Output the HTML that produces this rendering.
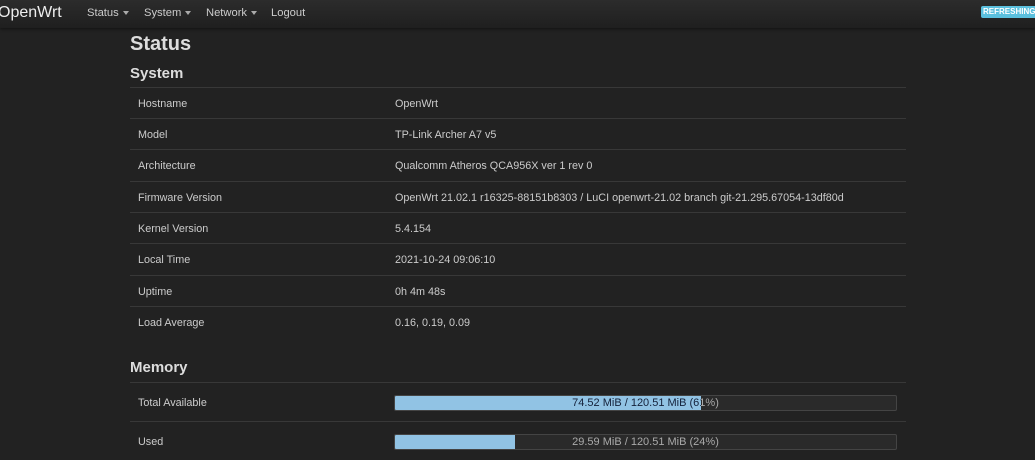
<!DOCTYPE html>
<html><head><meta charset="utf-8"><style>
*{margin:0;padding:0;box-sizing:border-box}
body{width:1035px;height:456px;overflow:hidden;background:#222;font-family:"Liberation Sans",sans-serif;color:#ccc;font-size:10.8px;position:relative}
.hdr{position:absolute;left:0;top:0;width:1035px;height:28px;background:linear-gradient(#2c2c2c,#1f1f1f);box-shadow:0 1px 3px rgba(0,0,0,.5)}
.brand{position:absolute;left:-2px;top:4px;font-size:16px;color:#eee}
.nav{position:absolute;top:7px;font-size:11.2px;color:#ccc}
.car{display:inline-block;width:0;height:0;border-left:3.5px solid transparent;border-right:3.5px solid transparent;border-top:4px solid #aaa;vertical-align:middle;margin-left:4px}
.badge{position:absolute;left:981px;top:6px;background:#5bc0de;color:#fff;font-size:8px;font-weight:bold;padding:1px 2px;line-height:10px;border-radius:2px;white-space:nowrap}
h1{position:absolute;left:130px;top:33px;font-size:20px;font-weight:bold;color:#ddd}
h2{position:absolute;left:130px;font-size:15px;font-weight:bold;color:#ddd}
.row{position:absolute;left:130px;width:776px;border-top:1px solid #383838}
.row span{position:absolute;left:8px}
.row b{font-weight:normal;position:absolute;left:265px;white-space:nowrap}
.bar{position:absolute;left:264px;top:12px;width:503px;height:16px;border:1px solid #444;background:#2a2a2a;border-radius:2px;overflow:hidden}
.fill{position:absolute;left:0;top:0;height:100%;background:#91c3e4;overflow:hidden}
.bt{position:absolute;left:0;top:0;width:501px;text-align:center;line-height:14px;font-size:11px;color:#aaa}
.fill .bt{color:#14213a}
</style></head><body>
<div class="hdr">
<div class="brand">OpenWrt</div>
<div class="nav" style="left:87px">Status<span class="car"></span></div>
<div class="nav" style="left:144px">System<span class="car"></span></div>
<div class="nav" style="left:206px">Network<span class="car"></span></div>
<div class="nav" style="left:271px">Logout</div>
<div class="badge">REFRESHING</div>
</div>
<h1>Status</h1>
<h2 style="top:65px">System</h2>
<div class="row" style="top:87px;height:31px"><span style="top:10px">Hostname</span><b style="top:10px">OpenWrt</b></div>
<div class="row" style="top:118px;height:31px"><span style="top:10px">Model</span><b style="top:10px">TP-Link Archer A7 v5</b></div>
<div class="row" style="top:149px;height:32px"><span style="top:10px">Architecture</span><b style="top:10px">Qualcomm Atheros QCA956X ver 1 rev 0</b></div>
<div class="row" style="top:181px;height:31px"><span style="top:10px">Firmware Version</span><b style="top:10px">OpenWrt 21.02.1 r16325-88151b8303 / LuCI openwrt-21.02 branch git-21.295.67054-13df80d</b></div>
<div class="row" style="top:212px;height:31px"><span style="top:10px">Kernel Version</span><b style="top:10px">5.4.154</b></div>
<div class="row" style="top:243px;height:32px"><span style="top:10px">Local Time</span><b style="top:10px">2021-10-24 09:06:10</b></div>
<div class="row" style="top:275px;height:31px"><span style="top:10px">Uptime</span><b style="top:10px">0h 4m 48s</b></div>
<div class="row" style="top:306px;height:31px"><span style="top:10px">Load Average</span><b style="top:10px">0.16, 0.19, 0.09</b></div>
<h2 style="top:359px">Memory</h2>
<div class="row" style="top:382px;height:39px"><span style="top:14px">Total Available</span>
<div class="bar"><div class="bt">74.52 MiB / 120.51 MiB (61%)</div><div class="fill" style="width:61%"><div class="bt">74.52 MiB / 120.51 MiB (61%)</div></div></div></div>
<div class="row" style="top:421px;height:39px"><span style="top:14px">Used</span>
<div class="bar"><div class="bt">29.59 MiB / 120.51 MiB (24%)</div><div class="fill" style="width:24%"><div class="bt">29.59 MiB / 120.51 MiB (24%)</div></div></div></div>
</body></html>
